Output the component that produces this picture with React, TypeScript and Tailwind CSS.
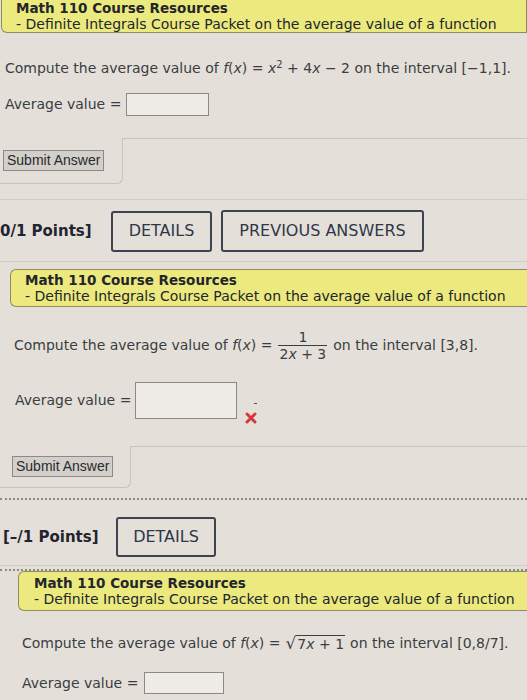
import React from 'react'

const font = { fontFamily: '"DejaVu Sans", Verdana, sans-serif' }

function Banner({ className }: { className: string }) {
  return (
    <div
      className={`border border-[#8f8b5e] bg-[#ece97f] text-[14px] leading-[16px] text-[#22262b] ${className}`}
    >
      <div className="text-[13.5px] font-bold">Math 110 Course Resources</div>
      <div>- Definite Integrals Course Packet on the average value of a function</div>
    </div>
  )
}

function AnswerBox({ className }: { className: string }) {
  return <span className={`inline-block border border-[#8c8985] bg-[#efece7] ${className}`} />
}

function SubmitTab({ left, height, pad }: { left: string; height: string; pad: string }) {
  return (
    <div className="flex">
      <div className={`${left} ${height} ${pad} flex items-center border-r border-b border-[#c9c4bc] rounded-br-[6px]`}>
        <button
          className="border border-[#8d8984] bg-[#d3cfca] px-[3px] py-[1px] text-[14px] leading-[17px] text-[#2a2a2a]"
          style={{ fontFamily: '"Liberation Sans", Arial, sans-serif' }}
        >
          Submit Answer
        </button>
      </div>
      <div className="flex-1 border-t border-[#c9c4bc]" />
    </div>
  )
}

function DetailsButton({ label, className }: { label: string; className: string }) {
  return (
    <button
      className={`flex items-center justify-center rounded-[3px] border-2 border-[#3d4350] text-[16px] text-[#2e3748] ${className}`}
    >
      {label}
    </button>
  )
}

function Fx() {
  return (
    <>
      <i>f</i>(<i>x</i>)
    </>
  )
}

export default function App() {
  return (
    <div className="min-h-[700px] w-[527px] overflow-hidden bg-[#e4e0d9] text-[#3a3d42]" style={font}>
      {/* problem 1 */}
      <Banner className="ml-[1px] rounded-bl-[6px] border-t-0 pl-[14px] pt-0 pb-0" />
      <div className="mt-[27px] pl-[5px] text-[14px] leading-[17px]">
        Compute the average value of <Fx /> = <i>x</i>
        <sup className="text-[10px]">2</sup> + 4<i>x</i> − 2 on the interval [−1,1].
      </div>
      <div className="mt-[16px] flex items-center gap-[5px] pl-[5px] text-[14px]">
        <span>Average value =</span>
        <AnswerBox className="h-[23px] w-[83px]" />
      </div>
      <div className="mt-[22px]">
        <SubmitTab left="w-[123px]" height="h-[46px]" pad="pl-[3px]" />
      </div>
      <div className="mt-[15px] border-t border-[#d0cbc3]" />
      <div className="mt-[10px] flex items-center">
        <span className="w-[111px] text-[15px] font-bold text-[#1f2430]">0/1 Points]</span>
        <DetailsButton label="DETAILS" className="h-[41px] w-[101px]" />
        <DetailsButton label="PREVIOUS ANSWERS" className="ml-[9px] h-[42px] w-[203px]" />
      </div>
      <div className="mt-[9px] border-t border-[#d0cbc3]" />

      {/* problem 2 */}
      <Banner className="ml-[10px] mt-[7px] rounded-l-[6px] border-r-0 pl-[14px] pt-[2px] pb-[2px]" />
      <div className="mt-[22px] flex items-center pl-[14px] text-[14px] leading-[17px]">
        <span>
          Compute the average value of <Fx /> ={' '}
        </span>
        <span className="mx-[6px] inline-flex flex-col items-center text-[14px] leading-[16px]">
          <span className="px-[2px]">1</span>
          <span className="border-t border-[#3a3d42] px-[1px]">
            2<i>x</i> + 3
          </span>
        </span>
        <span>on the interval [3,8].</span>
      </div>
      <div className="mt-[20px] flex items-center pl-[15px] text-[14px]">
        <span>Average value =</span>
        <AnswerBox className="ml-[4px] h-[37px] w-[102px]" />
        <span className="relative ml-[7px] h-[14px] w-[14px] translate-y-[6px] self-end">
          <svg viewBox="0 0 14 14" className="h-[14px] w-[14px]">
            <path d="M3 3 L11 11 M11 3 L3 11" stroke="#d6373f" strokeWidth="3" strokeLinecap="round" />
          </svg>
          <span className="absolute -top-[8px] left-[10px] h-[1px] w-[3px] bg-[#555]" />
        </span>
      </div>
      <div className="mt-[27px]">
        <SubmitTab left="w-[131px]" height="h-[42px]" pad="pl-[12px]" />
      </div>
      <div className="mt-[10px] border-t-2 border-dotted border-[#8c8983]" />
      <div className="mt-[17px] flex items-center">
        <span className="w-[116px] pl-[3px] text-[15px] font-bold text-[#1f2430]">[–/1 Points]</span>
        <DetailsButton label="DETAILS" className="h-[40px] w-[100px]" />
      </div>
      <div className="mt-[8px] border-t border-[#d0cbc3]" />
      <div className="mt-[3px] border-t-2 border-dotted border-[#8c8983]" />

      {/* problem 3 */}
      <Banner className="ml-[18px] rounded-l-[6px] border-r-0 pl-[15px] pt-[3px] pb-[3px]" />
      <div className="mt-[23px] flex items-center pl-[22px] text-[14px] leading-[17px]">
        <span>
          Compute the average value of <Fx /> ={' '}
        </span>
        <span className="ml-[5px] inline-flex items-end">
          <span className="text-[17px] leading-[18px]">√</span>
          <span className="border-t border-[#3a3d42] pl-[1px] pr-[1px] leading-[16px]">
            7<i>x</i> + 1
          </span>
        </span>
        <span className="ml-[5px]">on the interval [0,8/7].</span>
      </div>
      <div className="mt-[20px] flex items-center pl-[22px] text-[14px]">
        <span>Average value =</span>
        <AnswerBox className="ml-[6px] h-[22px] w-[80px]" />
      </div>
    </div>
  )
}
